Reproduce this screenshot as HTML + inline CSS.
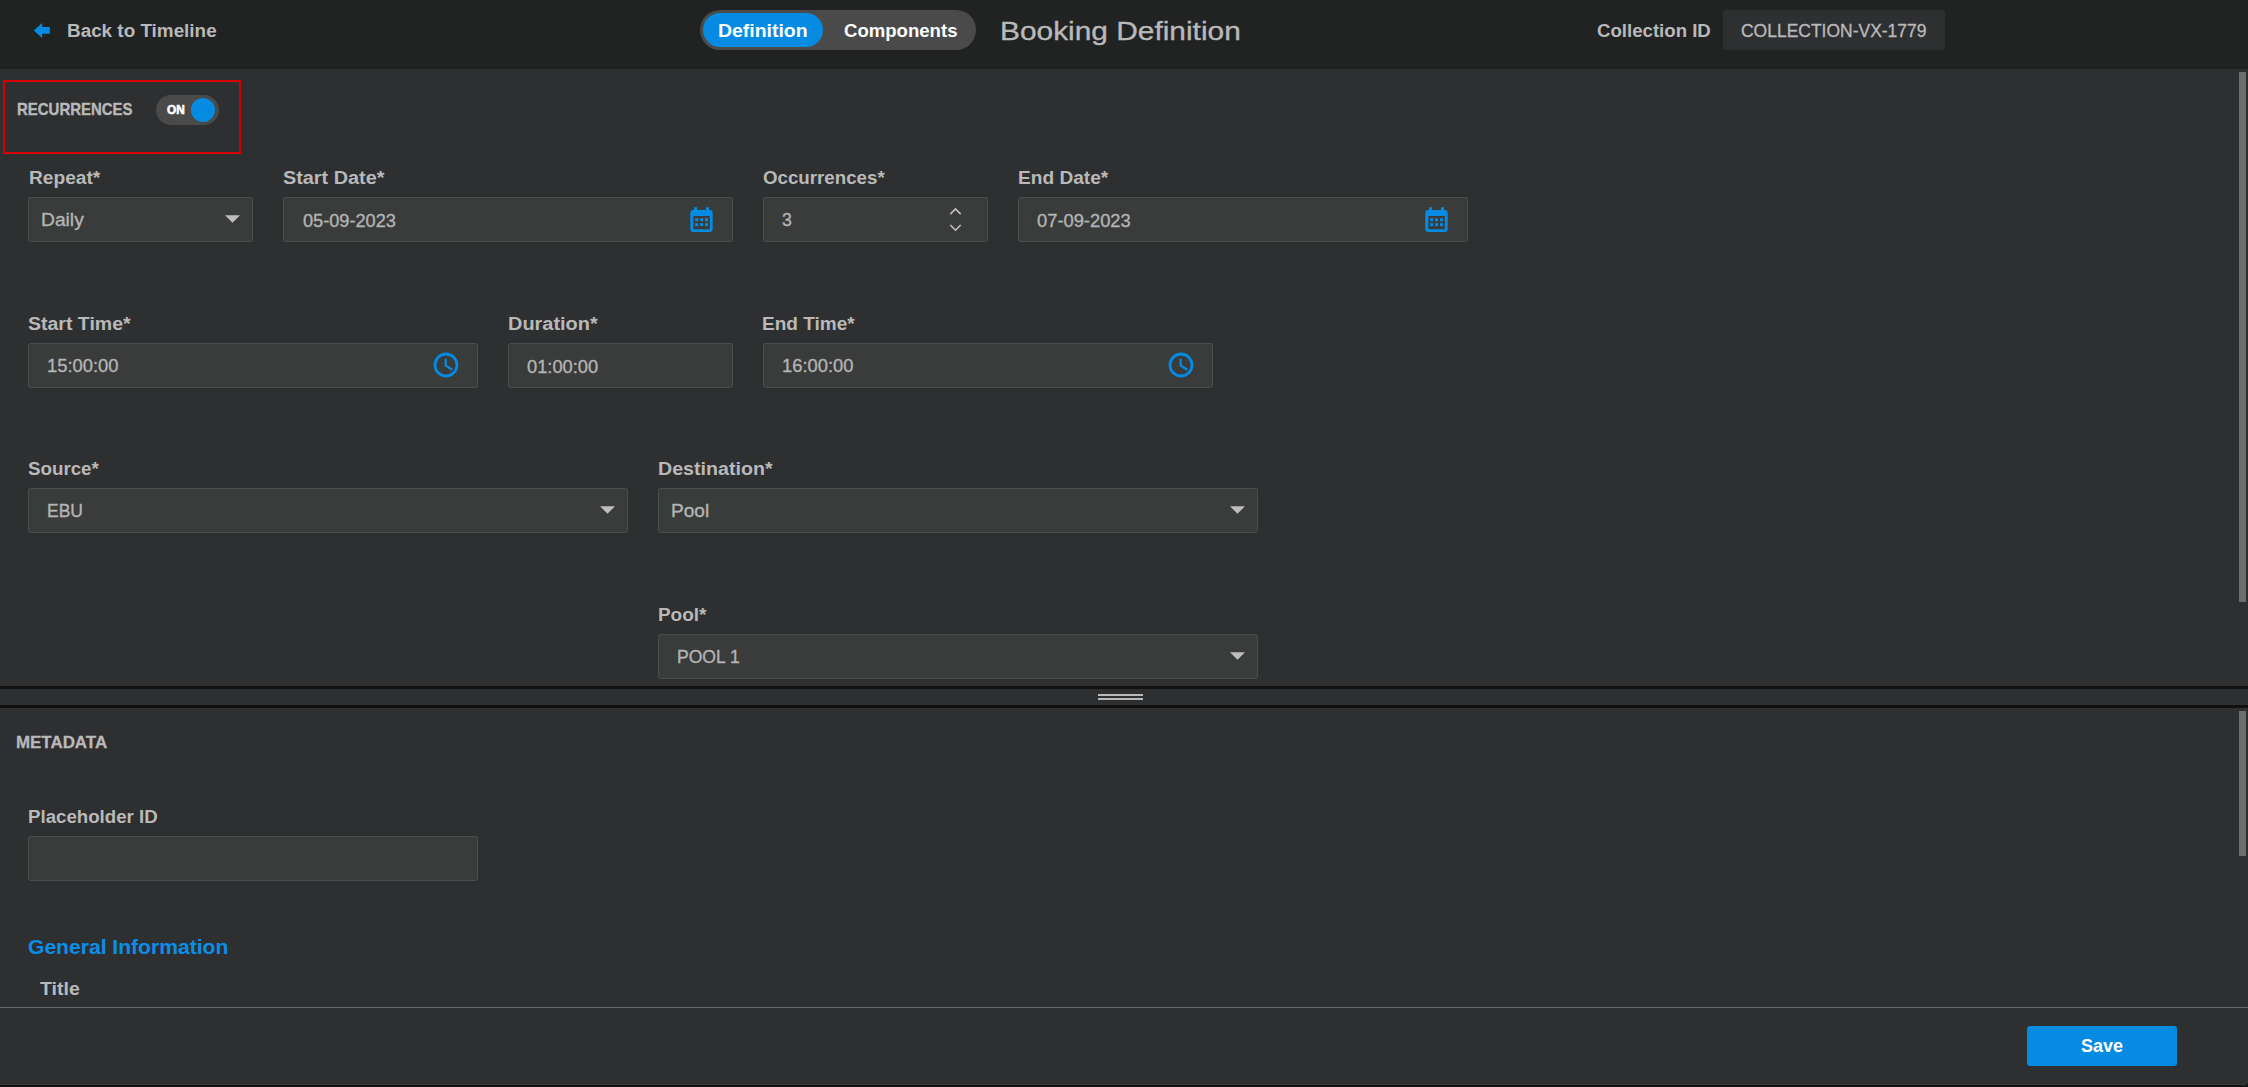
<!DOCTYPE html>
<html><head><meta charset="utf-8"><title>Booking Definition</title>
<style>
html,body{margin:0;padding:0}
body{width:2248px;height:1087px;background:#2e2f31;position:relative;overflow:hidden;font-family:"Liberation Sans",sans-serif}
.a{position:absolute;display:block}
.box{position:absolute;box-sizing:border-box;background:#3a3c3b;border:1px solid #4c4d4d;border-radius:2.5px}
.t{position:absolute;line-height:1;white-space:nowrap;transform-origin:0 0}
</style></head><body>
<div class="a" style="left:0;top:0;width:2248px;height:69px;background:#212323"></div>
<svg class="a" style="left:32px;top:21px" width="20" height="19" viewBox="32 21 20 19"><path d="M33.8 30.45L42.1 22.9V27.1H49.8V33.7H42.1V38Z" fill="#058be2"/></svg>
<div class="a" style="left:700px;top:10px;width:276px;height:40px;border-radius:20px;background:#4a4a4a"></div>
<div class="a" style="left:703px;top:13px;width:120px;height:34px;border-radius:17px;background:#058be2"></div>
<div class="a" style="left:1723px;top:10px;width:222px;height:40px;border-radius:3px;background:#2e2f31"></div>
<div class="a" style="left:3px;top:80px;width:238px;height:74px;box-sizing:border-box;border:2px solid #d40000"></div>
<div class="a" style="left:156px;top:95px;width:63px;height:30px;border-radius:15px;background:#4a4a4a"></div>
<div class="a" style="left:191px;top:98px;width:24px;height:24px;border-radius:12px;background:#058be2"></div>
<div class="box" style="left:28px;top:197px;width:225px;height:45px;"></div>
<div class="box" style="left:283px;top:197px;width:450px;height:45px;"></div>
<div class="box" style="left:763px;top:197px;width:225px;height:45px;"></div>
<div class="box" style="left:1018px;top:197px;width:450px;height:45px;"></div>
<div class="box" style="left:28px;top:343px;width:450px;height:45px;"></div>
<div class="box" style="left:508px;top:343px;width:225px;height:45px;"></div>
<div class="box" style="left:763px;top:343px;width:450px;height:45px;"></div>
<div class="box" style="left:28px;top:488px;width:600px;height:45px;"></div>
<div class="box" style="left:658px;top:488px;width:600px;height:45px;"></div>
<div class="box" style="left:658px;top:634px;width:600px;height:45px;"></div>
<div class="box" style="left:28px;top:836px;width:450px;height:45px;"></div>
<svg class="a" style="left:225px;top:215.15px" width="15" height="8" viewBox="0 0 15 7.5"><path d="M0 0H15L7.5 7.5Z" fill="#bdbdbd"/></svg>
<svg class="a" style="left:600.2px;top:506.15px" width="15" height="8" viewBox="0 0 15 7.5"><path d="M0 0H15L7.5 7.5Z" fill="#bdbdbd"/></svg>
<svg class="a" style="left:1230.2px;top:506.15px" width="15" height="8" viewBox="0 0 15 7.5"><path d="M0 0H15L7.5 7.5Z" fill="#bdbdbd"/></svg>
<svg class="a" style="left:1230.2px;top:652.15px" width="15" height="8" viewBox="0 0 15 7.5"><path d="M0 0H15L7.5 7.5Z" fill="#bdbdbd"/></svg>
<svg class="a" style="left:690px;top:206.6px" width="24" height="26" viewBox="0 0 24 26">
<path fill="#058be2" fill-rule="evenodd" d="M4 0.3h3v2.6h9V0.3h3v2.6h0.7a3 3 0 0 1 3 3v16.1a3 3 0 0 1-3 3H3.3a3 3 0 0 1-3-3V5.9a3 3 0 0 1 3-3H4ZM3.4 9.1v13.1h16.4v-13.1Z"/>
<g fill="#058be2"><rect x="5.2" y="11.25" width="3" height="3"/><rect x="10.1" y="11.25" width="3" height="3"/><rect x="15" y="11.25" width="3" height="3"/>
<rect x="5.2" y="16.15" width="3" height="3"/><rect x="10.1" y="16.15" width="3" height="3"/><rect x="15" y="16.15" width="3" height="3"/></g></svg>
<svg class="a" style="left:1425px;top:206.6px" width="24" height="26" viewBox="0 0 24 26">
<path fill="#058be2" fill-rule="evenodd" d="M4 0.3h3v2.6h9V0.3h3v2.6h0.7a3 3 0 0 1 3 3v16.1a3 3 0 0 1-3 3H3.3a3 3 0 0 1-3-3V5.9a3 3 0 0 1 3-3H4ZM3.4 9.1v13.1h16.4v-13.1Z"/>
<g fill="#058be2"><rect x="5.2" y="11.25" width="3" height="3"/><rect x="10.1" y="11.25" width="3" height="3"/><rect x="15" y="11.25" width="3" height="3"/>
<rect x="5.2" y="16.15" width="3" height="3"/><rect x="10.1" y="16.15" width="3" height="3"/><rect x="15" y="16.15" width="3" height="3"/></g></svg>
<svg class="a" style="left:432.45px;top:351.45px" width="28" height="28" viewBox="-14 -14 28 28">
<circle r="11" fill="none" stroke="#058be2" stroke-width="2.8"/><path d="M-0.3 -6.3V0.6L6.3 4.7" fill="none" stroke="#058be2" stroke-width="2.2"/></svg>
<svg class="a" style="left:1167.45px;top:351.45px" width="28" height="28" viewBox="-14 -14 28 28">
<circle r="11" fill="none" stroke="#058be2" stroke-width="2.8"/><path d="M-0.3 -6.3V0.6L6.3 4.7" fill="none" stroke="#058be2" stroke-width="2.2"/></svg>
<svg class="a" style="left:945px;top:200px" width="22" height="40" viewBox="945 200 22 40"><path d="M950.3 214.1L955.5 208.9L960.7 214.1M950.3 225L955.5 230.2L960.7 225" fill="none" stroke="#c0c0c0" stroke-width="1.6"/></svg>
<div class="a" style="left:0;top:686px;width:2248px;height:3px;background:#111"></div>
<div class="a" style="left:0;top:705px;width:2248px;height:3px;background:#111"></div>
<div class="a" style="left:1098px;top:694px;width:45px;height:2px;background:#b8b9b8"></div>
<div class="a" style="left:1098px;top:698px;width:45px;height:2px;background:#b8b9b8"></div>
<div class="a" style="left:2239px;top:72px;width:7px;height:530px;background:#6d6f6e"></div>
<div class="a" style="left:2239px;top:711px;width:7px;height:145px;background:#6d6f6e"></div>
<div class="a" style="left:0;top:1007px;width:2248px;height:1px;background:#666867"></div>
<div class="a" style="left:2027px;top:1026px;width:150px;height:40px;border-radius:3px;background:#058be2"></div>
<div class="a" style="left:0;top:1084px;width:2244px;height:1px;background:#3a3c3b"></div>
<div class="a" style="left:0;top:1085px;width:2248px;height:2px;background:#111"></div>
<svg class="a" style="left:2242px;top:1079px" width="6" height="8" viewBox="2242 1079 6 8"><path d="M2242 1085H2243.5Q2247 1085 2248.5 1080.5V1087H2242Z" fill="#191a1a"/><path d="M2242 1084.5H2243.5Q2247 1084.5 2248.5 1080.5" fill="none" stroke="#3a3c3b" stroke-width="1"/></svg>
<div class="t" style="left:67.49px;top:22px;font-size:18.7px;font-weight:700;color:#b9b9b9;transform:scaleX(1.0099)">Back to Timeline</div>
<div class="t" style="left:718.13px;top:22px;font-size:18.7px;font-weight:700;color:#ffffff;transform:scaleX(1.0398)">Definition</div>
<div class="t" style="left:843.84px;top:22px;font-size:18.7px;font-weight:700;color:#ffffff;transform:scaleX(0.9935)">Components</div>
<div class="t" style="left:999.81px;top:18px;font-size:26.5px;font-weight:400;color:#b9b9b9;transform:scaleX(1.1272);-webkit-text-stroke:0.35px #b9b9b9">Booking Definition</div>
<div class="t" style="left:1597.31px;top:22px;font-size:18.7px;font-weight:700;color:#b9b9b9;transform:scaleX(0.9966)">Collection ID</div>
<div class="t" style="left:1741.20px;top:22px;font-size:18.7px;font-weight:400;color:#b9b9b9;transform:scaleX(0.9350);-webkit-text-stroke:0.35px #b9b9b9">COLLECTION-VX-1779</div>
<div class="t" style="left:16.67px;top:101px;font-size:17px;font-weight:700;color:#b9b9b9;transform:scaleX(0.8800);-webkit-text-stroke:0.4px #b9b9b9">RECURRENCES</div>
<div class="t" style="left:166.71px;top:103px;font-size:13.2px;font-weight:700;color:#ffffff;transform:scaleX(0.8947);-webkit-text-stroke:0.7px #ffffff">ON</div>
<div class="t" style="left:28.94px;top:169px;font-size:18.7px;font-weight:700;color:#b9b9b9;transform:scaleX(1.0242)">Repeat*</div>
<div class="t" style="left:283.21px;top:169px;font-size:18.7px;font-weight:700;color:#b9b9b9;transform:scaleX(1.0614)">Start Date*</div>
<div class="t" style="left:763.05px;top:169px;font-size:18.7px;font-weight:700;color:#b9b9b9;transform:scaleX(1.0013)">Occurrences*</div>
<div class="t" style="left:1018.41px;top:169px;font-size:18.7px;font-weight:700;color:#b9b9b9;transform:scaleX(1.0231)">End Date*</div>
<div class="t" style="left:41.12px;top:211px;font-size:18.7px;font-weight:400;color:#b4b4b4;transform:scaleX(1.0295);-webkit-text-stroke:0.35px #b4b4b4">Daily</div>
<div class="t" style="left:302.50px;top:212px;font-size:18.7px;font-weight:400;color:#b4b4b4;transform:scaleX(0.9720);-webkit-text-stroke:0.35px #b4b4b4">05-09-2023</div>
<div class="t" style="left:781.67px;top:211px;font-size:18.7px;font-weight:400;color:#b4b4b4;transform:scaleX(0.9479);-webkit-text-stroke:0.35px #b4b4b4">3</div>
<div class="t" style="left:1037.14px;top:212px;font-size:18.7px;font-weight:400;color:#b4b4b4;transform:scaleX(0.9804);-webkit-text-stroke:0.35px #b4b4b4">07-09-2023</div>
<div class="t" style="left:28.22px;top:315px;font-size:18.7px;font-weight:700;color:#b9b9b9;transform:scaleX(1.0434)">Start Time*</div>
<div class="t" style="left:507.58px;top:315px;font-size:18.7px;font-weight:700;color:#b9b9b9;transform:scaleX(1.0661)">Duration*</div>
<div class="t" style="left:762.46px;top:315px;font-size:18.7px;font-weight:700;color:#b9b9b9;transform:scaleX(1.0178)">End Time*</div>
<div class="t" style="left:47.27px;top:357px;font-size:18.7px;font-weight:400;color:#b4b4b4;transform:scaleX(0.9812);-webkit-text-stroke:0.35px #b4b4b4">15:00:00</div>
<div class="t" style="left:526.96px;top:358px;font-size:18.7px;font-weight:400;color:#b4b4b4;transform:scaleX(0.9789);-webkit-text-stroke:0.35px #b4b4b4">01:00:00</div>
<div class="t" style="left:782.27px;top:357px;font-size:18.7px;font-weight:400;color:#b4b4b4;transform:scaleX(0.9812);-webkit-text-stroke:0.35px #b4b4b4">16:00:00</div>
<div class="t" style="left:27.51px;top:460px;font-size:18.7px;font-weight:700;color:#b9b9b9;transform:scaleX(1.0025)">Source*</div>
<div class="t" style="left:657.99px;top:460px;font-size:18.7px;font-weight:700;color:#b9b9b9;transform:scaleX(1.0505)">Destination*</div>
<div class="t" style="left:47.29px;top:502px;font-size:18.7px;font-weight:400;color:#b4b4b4;transform:scaleX(0.9345);-webkit-text-stroke:0.35px #b4b4b4">EBU</div>
<div class="t" style="left:671.30px;top:502px;font-size:18.7px;font-weight:400;color:#b4b4b4;transform:scaleX(1.0198);-webkit-text-stroke:0.35px #b4b4b4">Pool</div>
<div class="t" style="left:658.05px;top:606px;font-size:18.7px;font-weight:700;color:#b9b9b9;transform:scaleX(1.0125)">Pool*</div>
<div class="t" style="left:677.11px;top:648px;font-size:18.7px;font-weight:400;color:#b4b4b4;transform:scaleX(0.9395);-webkit-text-stroke:0.35px #b4b4b4">POOL 1</div>
<div class="t" style="left:16.28px;top:734px;font-size:17px;font-weight:700;color:#b9b9b9;transform:scaleX(0.9948);-webkit-text-stroke:0.3px #b9b9b9">METADATA</div>
<div class="t" style="left:27.70px;top:808px;font-size:18.7px;font-weight:700;color:#b9b9b9;transform:scaleX(0.9991)">Placeholder ID</div>
<div class="t" style="left:28.14px;top:937px;font-size:20.6px;font-weight:700;color:#0a8fe8;transform:scaleX(1.0237)">General Information</div>
<div class="t" style="left:40.11px;top:980px;font-size:18.7px;font-weight:700;color:#b9b9b9;transform:scaleX(1.0440)">Title</div>
<div class="t" style="left:2081.00px;top:1037px;font-size:18.7px;font-weight:700;color:#ffffff;transform:scaleX(0.9610)">Save</div>
</body></html>
